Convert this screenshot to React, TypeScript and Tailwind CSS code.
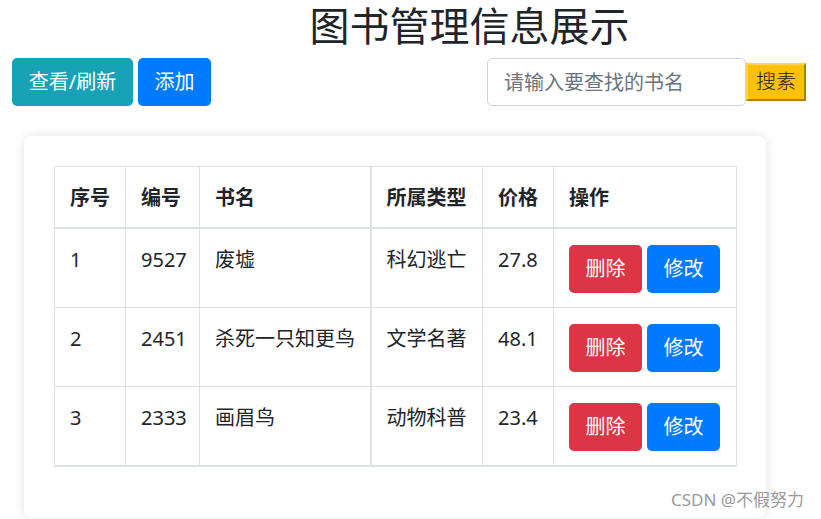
import React from "react";

type Book = { id: number; code: string; name: string; type: string; price: string };

const books: Book[] = [
  { id: 1, code: "9527", name: "废墟", type: "科幻逃亡", price: "27.8" },
  { id: 2, code: "2451", name: "杀死一只知更鸟", type: "文学名著", price: "48.1" },
  { id: 3, code: "2333", name: "画眉鸟", type: "动物科普", price: "23.4" },
];

const font = { fontFamily: '"Noto Sans", "Noto Sans CJK SC", sans-serif' };

const cell = "border border-[#dee2e6] pl-[15px] pr-0 pt-[16px] pb-[14px] text-left align-top whitespace-nowrap";

export default function App() {
  return (
    <div className="relative w-[821px] h-[519px] overflow-hidden bg-white text-[#212529]" style={font}>
      <div className="flex h-[58px] items-start justify-center pl-[118px]">
        <h1 className="m-0 text-[40px] leading-[52px] font-normal">图书管理信息展示</h1>
      </div>

      <div className="flex items-center pl-[12px] pr-[15px]">
        <button className="h-[48px] w-[121px] rounded-[5px] bg-[#17a2b8] text-white text-[20px] leading-[30px]">
          查看/刷新
        </button>
        <button className="ml-[5px] h-[48px] w-[73px] rounded-[5px] bg-[#007bff] text-white text-[20px] leading-[30px]">
          添加
        </button>
        <div className="ml-auto flex items-center">
          <input
            className="w-[259px] h-[48px] px-[16px] rounded-[5px] border border-[#ced4da] text-[20px] placeholder:text-[#6c757d] outline-none"
            placeholder="请输入要查找的书名"
          />
          <button className="h-[38px] w-[60px] bg-[#ffc107] text-[#1a1a1a] text-[20px] font-light leading-none border-2 border-t-[#ffd54a] border-l-[#ffd54a] border-r-[#a88400] border-b-[#a88400]">
            搜素
          </button>
        </div>
      </div>

      <div className="ml-[24px] mt-[30px] w-[742px] rounded-[8px] bg-white px-[30px] pt-[30px] pb-[51px] shadow-[0_0_12px_rgba(0,0,0,0.12)]">
        <table className="w-[682px] table-fixed border-collapse text-[20px] leading-[30px]">
          <colgroup>
            <col className="w-[71px]" />
            <col className="w-[74px]" />
            <col className="w-[171px]" />
            <col className="w-[112px]" />
            <col className="w-[71px]" />
            <col className="w-[183px]" />
          </colgroup>
          <thead>
            <tr className="border-b-2 border-[#dee2e6]">
              <th className={`${cell} font-bold`}>序号</th>
              <th className={`${cell} font-bold`}>编号</th>
              <th className={`${cell} border-r-2 font-bold`}>书名</th>
              <th className={`${cell} font-bold`}>所属类型</th>
              <th className={`${cell} font-bold`}>价格</th>
              <th className={`${cell} font-bold`}>操作</th>
            </tr>
          </thead>
          <tbody>
            {books.map((b, i) => (
              <tr key={b.id} className={i === books.length - 1 ? "border-b-2 border-[#dee2e6]" : ""}>
                <td className={cell}>{b.id}</td>
                <td className={cell}>{b.code}</td>
                <td className={`${cell} border-r-2`}>{b.name}</td>
                <td className={cell}>{b.type}</td>
                <td className={cell}>{b.price}</td>
                <td className={cell}>
                  <div className="flex gap-[5px]">
                    <button className="h-[48px] w-[73px] rounded-[5px] bg-[#dc3545] text-white text-[20px]">删除</button>
                    <button className="h-[48px] w-[73px] rounded-[5px] bg-[#007bff] text-white text-[20px]">修改</button>
                  </div>
                </td>
              </tr>
            ))}
          </tbody>
        </table>
      </div>

      <div className="absolute left-[671px] top-[487px] text-[17px] leading-[26px] text-[#9a9a9a]">
        CSDN @不假努力
      </div>
    </div>
  );
}
